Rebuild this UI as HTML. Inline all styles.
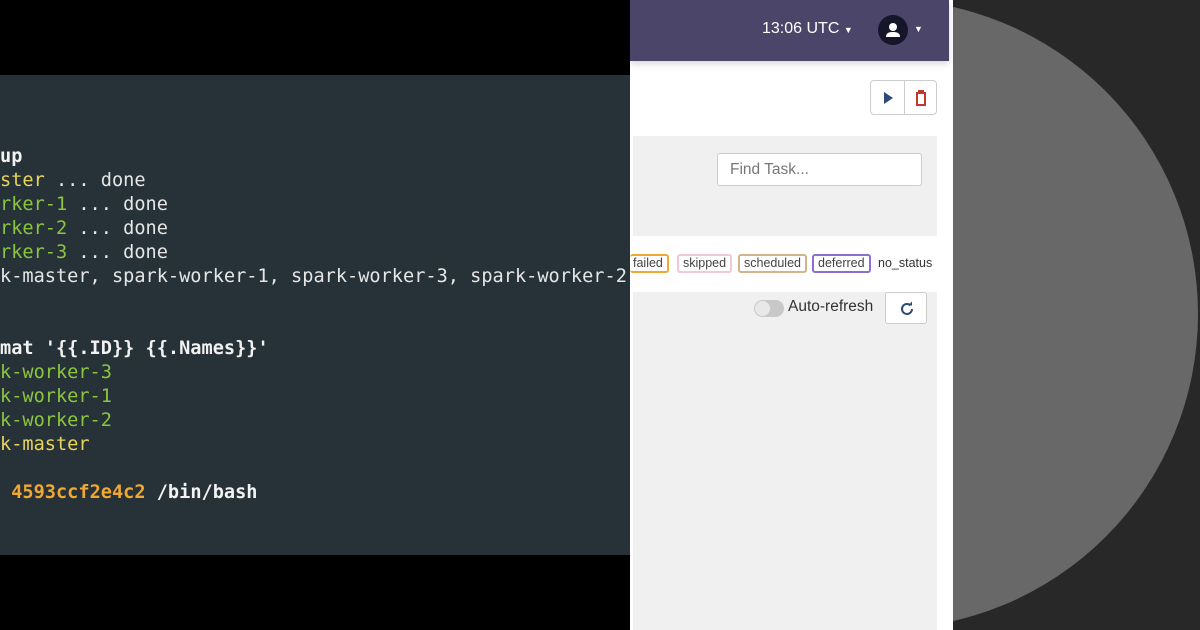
<!DOCTYPE html>
<html><head><meta charset="utf-8"><style>
*{margin:0;padding:0;box-sizing:border-box}
body{width:1200px;height:630px;overflow:hidden;background:#000;position:relative;font-family:"Liberation Sans",sans-serif}
.term{position:absolute;left:0;top:75px;width:630px;height:480px;background:#263238;overflow:hidden}
.term pre{position:absolute;left:0;top:70px;font-family:"DejaVu Sans Mono",monospace;font-size:18.6px;line-height:24px;color:#e6e6e6;white-space:pre}
.y{color:#e8d55c}.g{color:#8cc63f}.o{color:#f0a832}.b{font-weight:bold;color:#f2f2f2}
.right{position:absolute;left:953px;top:0;width:247px;height:630px;background:#282828;overflow:hidden}
.circ{position:absolute;left:-385px;top:-1px;width:630px;height:630px;border-radius:50%;background:#686868}
.panel{position:absolute;left:630px;top:0;width:323px;height:630px;background:#fff}
.hdr{position:absolute;left:0;top:0;width:319px;height:61px;background:#4b4669;box-shadow:0 3px 6px rgba(0,0,0,.15)}
.abs{position:absolute}
.box{position:absolute;left:3px;width:304px;background:#f0f0f0}
.tag{position:absolute;top:254px;height:19px;border:2px solid;border-radius:3px;font-size:12.5px;line-height:15px;padding:0 4px;color:#444;background:#fff}
</style></head><body>
<div class="term"><pre><span class="b">up</span>
<span class="y">ster</span> ... done
<span class="g">rker-1</span> ... done
<span class="g">rker-2</span> ... done
<span class="g">rker-3</span> ... done
k-master, spark-worker-1, spark-worker-3, spark-worker-2


<span class="b">mat '{{.ID}} {{.Names}}'</span>
<span class="g">k-worker-3</span>
<span class="g">k-worker-1</span>
<span class="g">k-worker-2</span>
<span class="y">k-master</span>

<span class="b"> <span class="o">4593ccf2e4c2</span> /bin/bash</span></pre></div>
<div class="right"><div class="circ"></div></div>
<div class="panel">
 <div class="hdr">
  <div class="abs" style="left:132px;top:20px;color:#fff;font-size:16px">13:06 UTC <span style="font-size:9px">▼</span></div>
  <div class="abs" style="left:248px;top:15px;width:30px;height:30px;border-radius:50%;background:#16162a">
   <svg width="30" height="30" viewBox="0 0 30 30"><circle cx="15" cy="12" r="4" fill="#fff"/><path d="M8 22c0-4 3-5 7-5s7 1 7 5z" fill="#fff"/></svg></div>
  <div class="abs" style="left:284px;top:24px;color:#fff;font-size:9px">▼</div>
 </div>
 <div class="abs" style="left:240px;top:80px;width:67px;height:35px;border:1px solid #ccc;border-radius:4px;background:#fff">
  <div class="abs" style="left:33px;top:0;width:1px;height:33px;background:#ccc"></div>
  <svg class="abs" style="left:12px;top:10px" width="12" height="14"><path d="M1 1L10 7L1 13z" fill="#2d4a78"/></svg>
  <svg class="abs" style="left:43px;top:8px" width="14" height="18"><path d="M2 4h10M5 4V2h4v2M3 5v11h8V5" fill="none" stroke="#c0392b" stroke-width="2"/></svg>
 </div>
 <div class="box" style="top:136px;height:100px"></div>
 <div class="abs" style="left:87px;top:153px;width:205px;height:33px;background:#fff;border:1px solid #ccc;border-radius:3px;font-size:15.5px;color:#777;padding:7px 12px">Find Task...</div>
 <div class="tag" style="left:0;border-color:#f0a830;border-left:none;padding-left:3px">failed</div>
 <div class="tag" style="left:47px;border-color:#f2c8d4">skipped</div>
 <div class="tag" style="left:108px;border-color:#d2b48c">scheduled</div>
 <div class="tag" style="left:182px;border-color:#8a6fd0">deferred</div>
 <div class="abs" style="left:248px;top:256px;font-size:12.5px;color:#333">no_status</div>
 <div class="box" style="top:292px;height:338px"></div>
 <div class="abs" style="left:124px;top:300px;width:30px;height:17px;border-radius:9px;background:#c8c8c8"><div class="abs" style="left:1px;top:1px;width:15px;height:15px;border-radius:50%;background:#e8e8e8"></div></div>
 <div class="abs" style="left:158px;top:298px;font-size:15.5px;color:#333">Auto-refresh</div>
 <div class="abs" style="left:255px;top:292px;width:42px;height:32px;background:#fff;border:1px solid #ccc;border-radius:3px">
  <svg class="abs" style="left:13px;top:8px" width="16" height="16" viewBox="0 0 16 16"><path d="M13 8a5 5 0 1 1-1.5-3.6" fill="none" stroke="#2d4a78" stroke-width="2"/><path d="M9 4.5h4V0.5z" fill="#2d4a78"/></svg>
 </div>
</div>
</body></html>
